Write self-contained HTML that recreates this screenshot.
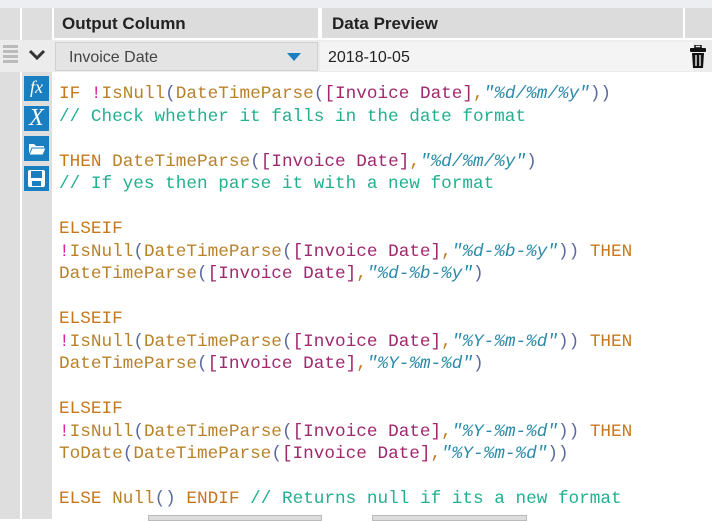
<!DOCTYPE html>
<html><head><style>
body{margin:0;width:712px;height:519px;overflow:hidden;background:#fff;font-family:"Liberation Sans",sans-serif;position:relative}
.a{position:absolute}
.code{position:absolute;left:59px;top:83px;font-family:"Liberation Mono",monospace;font-size:17.7px;line-height:22.5px;white-space:pre;color:#c07a1e}
.k{color:#c8781c}.f{color:#b8822a}.p{color:#5a6aa0}.v{color:#a0286e}.s{color:#2a8aa8;font-style:italic}.c{color:#22b090}.n{color:#e020a0}
.ic{position:absolute;left:24px;width:25px;height:25px;background:#1a7fc0;color:#fff;text-align:center}
</style></head><body>
<div class="a" style="left:0;top:0;width:712px;height:8px;background:#eceef2"></div>
<div class="a" style="left:0;top:8px;width:20px;height:511px;background:#dedede"></div>
<div class="a" style="left:22px;top:8px;width:30px;height:511px;background:#dedede"></div>
<div class="a" style="left:54px;top:8px;width:264px;height:30px;background:#dcdcdc;font-weight:bold;font-size:17px;line-height:31px;padding-left:8px;box-sizing:border-box;color:#222">Output Column</div>
<div class="a" style="left:322px;top:8px;width:361px;height:30px;background:#dcdcdc;font-weight:bold;font-size:17px;line-height:31px;padding-left:10px;box-sizing:border-box;color:#222">Data Preview</div>
<div class="a" style="left:685px;top:8px;width:27px;height:30px;background:#dcdcdc"></div>
<div class="a" style="left:0;top:40px;width:712px;height:32px;background:#ececec"></div>
<div class="a" style="left:3px;top:45px;width:15px;height:3px;background:#bbb;box-shadow:0 5px 0 #bbb,0 10px 0 #bbb,0 15px 0 #bbb"></div>
<svg class="a" style="left:28px;top:49px" width="18" height="12"><path d="M2 2 L9 9 L16 2" stroke="#333" stroke-width="3" fill="none"/></svg>
<div class="a" style="left:55px;top:42px;width:263px;height:29px;background:#e4e4e4;border:1px solid #d0d0d0;box-sizing:border-box;font-size:16px;line-height:29px;padding-left:13px;color:#444">Invoice Date</div>
<svg class="a" style="left:287px;top:53px" width="14" height="9"><path d="M0 0 L14 0 L7 8Z" fill="#1a7fc0"/></svg>
<div class="a" style="left:320px;top:42px;width:365px;height:29px;background:#f4f4f4;font-size:16px;line-height:31px;padding-left:8px;color:#222">2018-10-05</div>
<svg class="a" style="left:689px;top:45px" width="18" height="24"><rect x="6" y="0" width="6" height="3" fill="none" stroke="#111" stroke-width="1.5"/><rect x="1" y="3" width="16" height="4" rx="1" fill="#111"/><path d="M3 8 H15 L14 23 H4Z" fill="#111"/><path d="M7 10 V21 M11 10 V21" stroke="#fff" stroke-width="1.3"/></svg>
<div class="ic" style="top:76px;font-family:'Liberation Serif',serif;font-style:italic;font-size:18px;line-height:23px">fx</div>
<div class="ic" style="top:106px;font-family:'Liberation Serif',serif;font-style:italic;font-size:24px;line-height:24px">X</div>
<div class="ic" style="top:136px"><svg width="25" height="25"><path d="M5 8 H10 L12 10 H20 V18 H5Z" fill="#fff"/><path d="M5 19 L8 12 H22 L19 19Z" fill="#fff" stroke="#1a7fc0" stroke-width="1"/></svg></div>
<div class="ic" style="top:166px"><svg width="25" height="25"><rect x="4" y="4" width="17" height="17" rx="2" fill="#fff"/><rect x="7" y="5" width="11" height="7" fill="#1a7fc0"/><rect x="8" y="15" width="9" height="5" fill="#1a7fc0"/></svg></div>
<div class="code"><span class="k">IF</span> <span class="n">!</span><span class="f">IsNull</span><span class="p">(</span><span class="f">DateTimeParse</span><span class="p">(</span><span class="v">[Invoice Date]</span>,<span class="s">"%d/%m/%y"</span><span class="p">))</span>
<span class="c">// Check whether it falls in the date format</span>

<span class="k">THEN</span> <span class="f">DateTimeParse</span><span class="p">(</span><span class="v">[Invoice Date]</span>,<span class="s">"%d/%m/%y"</span><span class="p">)</span>
<span class="c">// If yes then parse it with a new format</span>

<span class="k">ELSEIF</span>
<span class="n">!</span><span class="f">IsNull</span><span class="p">(</span><span class="f">DateTimeParse</span><span class="p">(</span><span class="v">[Invoice Date]</span>,<span class="s">"%d-%b-%y"</span><span class="p">))</span> <span class="k">THEN</span>
<span class="f">DateTimeParse</span><span class="p">(</span><span class="v">[Invoice Date]</span>,<span class="s">"%d-%b-%y"</span><span class="p">)</span>

<span class="k">ELSEIF</span>
<span class="n">!</span><span class="f">IsNull</span><span class="p">(</span><span class="f">DateTimeParse</span><span class="p">(</span><span class="v">[Invoice Date]</span>,<span class="s">"%Y-%m-%d"</span><span class="p">))</span> <span class="k">THEN</span>
<span class="f">DateTimeParse</span><span class="p">(</span><span class="v">[Invoice Date]</span>,<span class="s">"%Y-%m-%d"</span><span class="p">)</span>

<span class="k">ELSEIF</span>
<span class="n">!</span><span class="f">IsNull</span><span class="p">(</span><span class="f">DateTimeParse</span><span class="p">(</span><span class="v">[Invoice Date]</span>,<span class="s">"%Y-%m-%d"</span><span class="p">))</span> <span class="k">THEN</span>
<span class="f">ToDate</span><span class="p">(</span><span class="f">DateTimeParse</span><span class="p">(</span><span class="v">[Invoice Date]</span>,<span class="s">"%Y-%m-%d"</span><span class="p">))</span>

<span class="k">ELSE</span> <span class="f">Null</span><span class="p">()</span> <span class="k">ENDIF</span> <span class="c">// Returns null if its a new format</span></div>
<div class="a" style="left:148px;top:515px;width:172px;height:4px;background:#ddd;border:1px solid #bbb"></div>
<div class="a" style="left:372px;top:515px;width:153px;height:4px;background:#ddd;border:1px solid #bbb"></div>
</body></html>
